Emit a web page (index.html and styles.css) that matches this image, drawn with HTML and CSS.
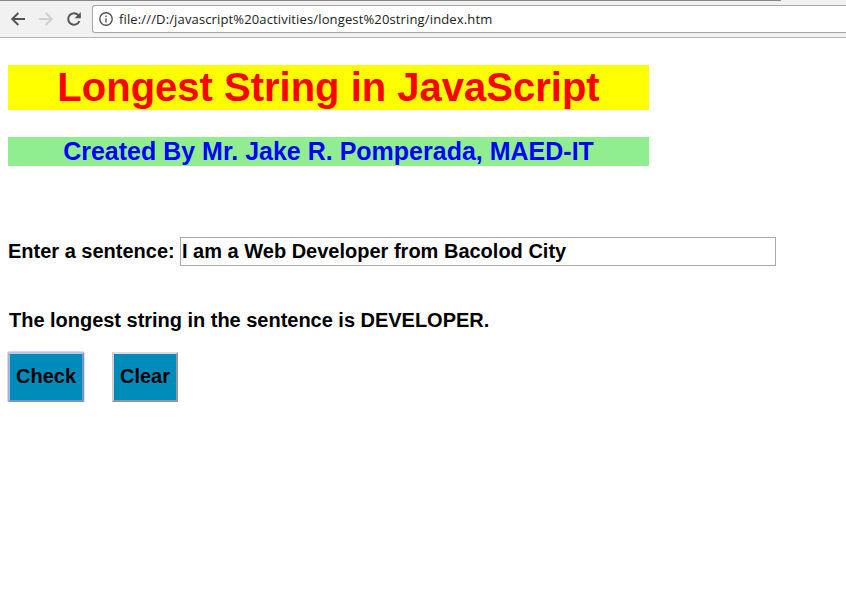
FILE: index.html
```
<!DOCTYPE html>
<html lang="en">
<head>
<meta charset="utf-8">
<title>Longest String in JavaScript</title>
<link rel="stylesheet" href="styles.css">
</head>
<body>
<header class="toolbar">
  <div class="tab-edge"></div>
  <nav class="nav">
    <svg class="icon" viewBox="0 0 16 16"><path d="M15 8H2.5M8.3 2L2.3 8l6 6"/></svg>
    <svg class="icon icon-off" viewBox="0 0 16 16"><path d="M1 8h12.5M7.7 2l6 6-6 6"/></svg>
    <svg class="icon" viewBox="0 0 16 16"><path d="M13.4 10A5.8 5.8 0 1 1 12.3 4.1L14 5.8"/><path class="solid" d="M14.8 1v6.2H8.6z"/></svg>
  </nav>
  <div class="address">
    <svg class="info" viewBox="0 0 14 14"><circle cx="7" cy="7" r="6.2"/><path d="M7 6.2v4.3M7 3.4v1.6"/></svg>
    <span class="url">file:///D:/javascript%20activities/longest%20string/index.htm</span>
  </div>
</header>
<main class="page">
  <h1 class="title">Longest String in JavaScript</h1>
  <h2 class="author">Created By Mr. Jake R. Pomperada, MAED-IT</h2>
  <div class="field">
    <label for="sentence">Enter a sentence:</label>
    <input id="sentence" class="sentence" type="text" value="I am a Web Developer from Bacolod City">
  </div>
  <p class="result">The longest string in the sentence is DEVELOPER.</p>
  <div class="actions">
    <button class="button check" type="button">Check</button>
    <button class="button clear" type="button">Clear</button>
  </div>
</main>
</body>
</html>
```
FILE: styles.css
```
* { box-sizing: border-box; }
body {
  margin: 0;
  background: #fff;
  color: #000;
  font-family: "Liberation Sans", Arial, sans-serif;
  overflow: hidden;
}
.toolbar {
  display: grid;
  grid-template-columns: 92px 1fr;
  grid-template-rows: 5px 28px;
  height: 38px;
  background: #f2f1f2;
  border-bottom: 1px solid #b5b5b5;
}
.tab-edge {
  grid-column: 1 / 3;
  width: 781px;
  height: 1px;
  background: #8a868a;
}
.nav {
  display: flex;
  align-items: center;
  gap: 12px;
  padding-left: 10px;
}
.icon {
  flex: none;
  width: 16px;
  height: 16px;
  fill: none;
  stroke: #555;
  stroke-width: 2;
}
.icon-off { stroke: #d0d0d0; }
.icon .solid { fill: #555; stroke: none; }
.address {
  display: flex;
  align-items: center;
  gap: 6px;
  padding-left: 6px;
  background: #fff;
  border: 1px solid #a6a6a6;
  border-right: 0;
  border-radius: 3px 0 0 3px;
}
.info {
  width: 14px;
  height: 14px;
  fill: none;
  stroke: #555;
  stroke-width: 1.4;
}
.url {
  font: 13px/20px "Open Sans", sans-serif;
  letter-spacing: 0.14px;
  color: #222;
  white-space: nowrap;
}
.page {
  padding: 27px 8px 0;
  font-size: 20px;
  font-weight: bold;
}
.title, .author {
  width: 641px;
  margin: 0;
  text-align: center;
  white-space: nowrap;
}
.title {
  height: 45px;
  background: #ff0;
  color: #f00;
  font-size: 40px;
  line-height: 45px;
}
.author {
  height: 29px;
  margin-top: 27px;
  background: #90ee90;
  color: #00f;
  font-size: 25px;
  line-height: 29px;
}
.field {
  display: flex;
  margin-top: 71px;
  line-height: 28px;
  white-space: nowrap;
}
.field label { width: 172px; }
.sentence {
  width: 596px;
  height: 29px;
  padding: 1px;
  border: 1px solid #a9a9a9;
  background: #fff;
  color: #000;
  font: inherit;
}
.result {
  margin: 42px 0 0 1px;
  line-height: 24px;
  letter-spacing: -0.02px;
  white-space: nowrap;
}
.actions {
  display: flex;
  gap: 28px;
  margin-top: 20px;
}
.button {
  height: 50px;
  padding: 0 0 2px;
  background: #008cba;
  color: #000;
  font: inherit;
  border: 2px solid;
}
.check {
  width: 76px;
  border-color: #b9c6e6 #7d93c4 #7d93c4 #a3b3dc;
  border-radius: 2px;
  box-shadow: 0 0 0 1px rgba(130, 155, 215, 0.35);
}
.clear {
  width: 66px;
  border-color: #ddd #969696 #969696 #d0d0d0;
}
```
